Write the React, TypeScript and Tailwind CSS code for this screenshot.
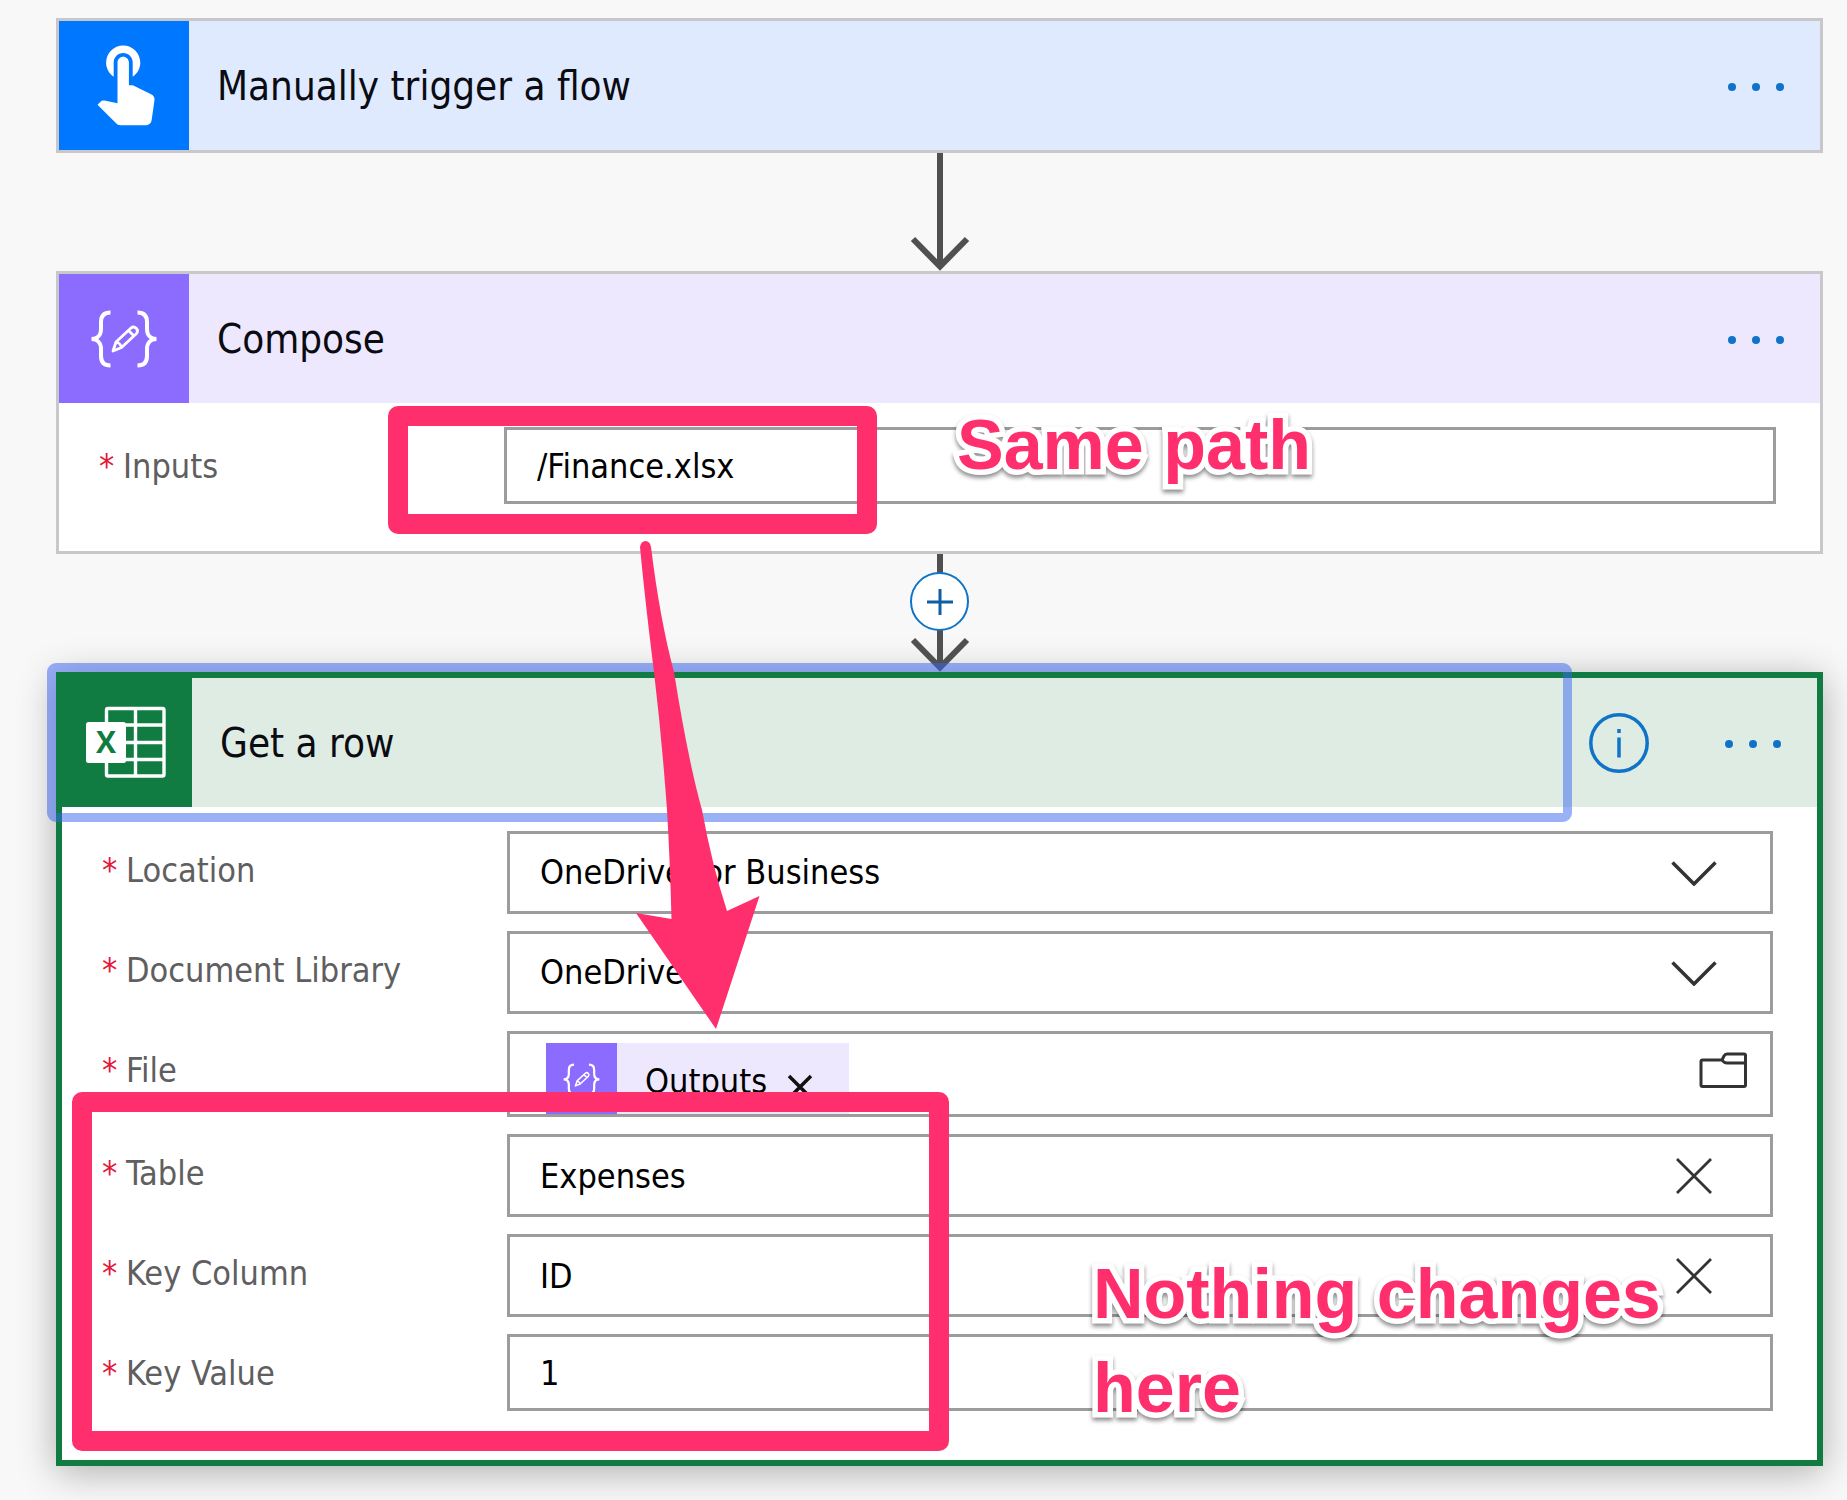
import { useState } from 'react';
import type { ReactNode } from 'react';
import clsx from 'clsx';

function TouchIcon() {
  return (
    <svg viewBox="0 0 129 129" className="w-full h-full" aria-hidden="true">
      <path
        fill="#fff"
        transform="translate(20 13) scale(3.8)"
        d="M9 11.24V7.5C9 6.12 10.12 5 11.5 5S14 6.12 14 7.5v3.74c1.21-.81 2-2.18 2-3.74C16 5.01 13.99 3 11.5 3S7 5.01 7 7.5c0 1.56.79 2.93 2 3.74zm9.84 4.63l-4.54-2.26c-.17-.07-.35-.11-.54-.11H13v-6c0-.83-.67-1.5-1.5-1.5S10 6.67 10 7.5v10.74l-3.43-.72c-.08-.01-.15-.03-.24-.03-.31 0-.59.13-.79.33l-.79.8 4.94 4.94c.27.27.65.44 1.06.44h6.79c.75 0 1.33-.55 1.44-1.28l.75-5.27c.01-.07.02-.14.02-.2 0-.62-.38-1.16-.91-1.38z"
      />
    </svg>
  );
}

function ComposeIcon() {
  return (
    <svg viewBox="0 0 129 129" className="w-full h-full" fill="none" stroke="#fff" strokeWidth="4" aria-hidden="true">
      <path d="M51 38.500C43.500 38.500 41.500 43 41.500 48V55C41.500 61 38 65 32 65C38 65 41.500 69 41.500 75V82C41.500 87 43.500 91.500 51 91.500" />
      <path d="M78 38.500C85.500 38.500 87.500 43 87.500 48V55C87.500 61 91 65 97 65C91 65 87.500 69 87.500 75V82C87.500 87 85.500 91.500 78 91.500" />
      <path
        strokeWidth="2.800"
        strokeLinejoin="round"
        d="M53.500 77L56.500 68L71.500 54C75 51 80 56 77 59.500L62 73.500ZM56.500 68C59 68.500 61.500 71 62 73.500M69 56.500L74.500 62"
      />
    </svg>
  );
}

function ExcelIcon() {
  return (
    <svg viewBox="0 0 129 129" className="w-full h-full" aria-hidden="true">
      <g fill="none" stroke="#fff" strokeWidth="3.400">
        <rect x="44" y="30.500" width="57.500" height="67.500" rx="1.500" />
        <path d="M73 30V98M44 47H102M44 64.500H102M44 81.500H102" />
      </g>
      <rect x="23.500" y="44" width="40" height="41" rx="2.500" fill="#fff" />
      <text x="43.500" y="75" textAnchor="middle" fontSize="30" fontWeight="700" fill="#107c41" fontFamily="'Open Sans', sans-serif">
        X
      </text>
    </svg>
  );
}

function MoreButton() {
  return (
    <button type="button" aria-label="More commands" className="flex items-center gap-4 pt-[2px] pl-6 pr-9 h-full">
      <span className="w-2 h-2 rounded-full bg-[#0f74c8]" />
      <span className="w-2 h-2 rounded-full bg-[#0f74c8]" />
      <span className="w-2 h-2 rounded-full bg-[#0f74c8]" />
    </button>
  );
}

interface StepCardProps {
  title: string;
  icon: ReactNode;
  iconClass: string;
  headerClass: string;
  selected?: boolean;
  children?: ReactNode;
}

function StepCard({ title, icon, iconClass, headerClass, selected, children }: StepCardProps) {
  return (
    <section
      className={clsx(
        'bg-white',
        selected ? 'border-6 border-[#107c41] shadow-[0_6px_36px_rgba(0,0,0,0.3)]' : 'border-3 border-[#c8c7ca]'
      )}
    >
      <header className={clsx('flex h-[129px]', headerClass)}>
        <button type="button" className="relative flex flex-1 items-center text-left">
          <span className={clsx('w-[130px] h-[129px] shrink-0', iconClass)}>{icon}</span>
          <span className="pl-7 text-[40px] leading-[52px] text-[#0b0b12]">{title}</span>
          {selected && (
            <span className="absolute -inset-[15px] border-9 rounded-[9px] border-[rgba(53,99,239,0.5)]" />
          )}
        </button>
        {selected && (
          <button type="button" aria-label="Step details" className="mx-8 shrink-0">
            <svg viewBox="0 0 60 60" className="w-[60px] h-[60px]" fill="none" stroke="#0f74c8">
              <circle cx="30" cy="30" r="28.200" strokeWidth="3.500" />
              <path d="M30 24.500V44.500M30 16V20" strokeWidth="3.500" />
            </svg>
          </button>
        )}
        <div className={clsx('shrink-0', selected && 'pl-5')}>
          <MoreButton />
        </div>
      </header>
      {children && (
        <div className={clsx('flex flex-col gap-[17px] pt-6 pr-11', selected ? 'pb-12' : 'pb-[46px]')}>{children}</div>
      )}
    </section>
  );
}

function Field({ id, label, children }: { id: string; label: string; children: ReactNode }) {
  return (
    <div className="flex items-start">
      <label htmlFor={id} className="w-[445px] shrink-0 pl-10 text-[34px] leading-[78px] text-[#5f5e60]">
        <span className="inline-block w-6 text-[#e3193a]">*</span>
        {label}
      </label>
      <div className="relative flex-1">{children}</div>
    </div>
  );
}

const boxClass = 'block w-full border-3 border-[#9c9c9c] bg-white pl-[30px] text-[34px] text-black outline-none';

function TextField({ id, label, initial }: { id: string; label: string; initial: string }) {
  const [value, setValue] = useState(initial);
  return (
    <Field id={id} label={label}>
      <input id={id} value={value} onChange={(e) => setValue(e.target.value)} className={clsx(boxClass, 'h-[77px]')} />
    </Field>
  );
}

function ClearableField({ id, label, initial }: { id: string; label: string; initial: string }) {
  const [value, setValue] = useState(initial);
  return (
    <Field id={id} label={label}>
      <input id={id} value={value} onChange={(e) => setValue(e.target.value)} className={clsx(boxClass, 'h-[83px]')} />
      <button
        type="button"
        aria-label={`Clear ${label}`}
        onClick={() => setValue('')}
        className="absolute inset-y-0 right-[61px] flex items-center"
      >
        <svg viewBox="0 0 36 36" className="w-9 h-9" stroke="#333" strokeWidth="2.800">
          <path d="M1 1L35 35M35 1L1 35" />
        </svg>
      </button>
    </Field>
  );
}

function SelectField({ id, label, options }: { id: string; label: string; options: string[] }) {
  return (
    <Field id={id} label={label}>
      <select id={id} className={clsx(boxClass, 'h-[83px] appearance-none')}>
        {options.map((option) => (
          <option key={option}>{option}</option>
        ))}
      </select>
      <span className="pointer-events-none absolute inset-y-0 right-[56px] flex items-center">
        <svg viewBox="0 0 46 26" className="w-[46px] h-[26px]" fill="none" stroke="#333" strokeWidth="3.500">
          <path d="M1.500 2.500L23 24L44.500 2.500" />
        </svg>
      </span>
    </Field>
  );
}

function FileField() {
  return (
    <Field id="file" label="File">
      <div id="file" className={clsx(boxClass, 'h-[86px] overflow-hidden pt-[9px]')}>
        <div className="ml-[6px] inline-flex h-[72px] bg-[#eee8ff]">
          <span className="w-[71px] h-[72px] bg-[#8c6cff]">
            <ComposeIcon />
          </span>
          <span className="pl-7 leading-[76px]">Outputs</span>
          <button type="button" aria-label="Remove Outputs" className="pl-5 pr-9 pt-4">
            <svg viewBox="0 0 26 26" className="w-[26px] h-[26px]" stroke="#111" strokeWidth="3.500">
              <path d="M2 2L24 24M24 2L2 24" />
            </svg>
          </button>
        </div>
      </div>
      <button type="button" aria-label="Browse files" className="absolute top-[21px] right-[26px]">
        <svg viewBox="0 0 48 37" className="w-12 h-[37px]" fill="none" stroke="#333" strokeWidth="3" strokeLinejoin="round">
          <path d="M23 8H3.500Q2 8 2 9.500V33Q2 34.500 3.500 34.500H45Q46.500 34.500 46.500 33V3.500Q46.500 2 45 2H28Q26 2 25 4L23 8Q25 11 28 11H46" />
        </svg>
      </button>
    </Field>
  );
}

function Connector({ withAdd }: { withAdd?: boolean }) {
  return (
    <div className="relative flex h-[118px] justify-center">
      <svg viewBox="0 0 60 118" className="w-[60px] h-[118px]" fill="none" stroke="#505050" strokeWidth="6">
        <path d="M30 0V114M3 86L30 113.500L57 86" />
      </svg>
      {withAdd && (
        <button
          type="button"
          aria-label="Insert a new step"
          className="absolute top-[18px] w-[59px] h-[59px] rounded-full border-2 border-[#0f74c8] bg-white flex items-center justify-center"
        >
          <svg viewBox="0 0 28 28" className="w-7 h-7" stroke="#0f5fa8" strokeWidth="3">
            <path d="M14 1V27M1 14H27" />
          </svg>
        </button>
      )}
    </div>
  );
}

const calloutClass =
  "absolute font-['Liberation_Sans',sans-serif] font-bold text-[70px] leading-[94px] text-[#ff2e6d] [-webkit-text-stroke:11px_white] [paint-order:stroke_fill] drop-shadow-[0_3px_2px_rgba(0,0,0,0.45)]";

// Markup drawn on top of the flow
function Annotations() {
  return (
    <div className="pointer-events-none absolute inset-0">
      <div className="absolute left-[388px] top-[406px] w-[489px] h-[128px] border-20 border-[#ff2e6d] rounded-[10px]" />
      <div className="absolute left-[72px] top-[1092px] w-[877px] h-[359px] border-20 border-[#ff2e6d] rounded-[10px]" />
      <svg viewBox="0 0 124 490" className="absolute left-[636px] top-[540px] w-[124px] h-[490px]" fill="#ff2e6d">
        <path d="M4 7Q5 1 9.500 1Q14 1 15 7Q24 80 38 132Q52 220 66 270Q76 325 91 371L123.500 356L80 489L0 373L35.500 379Q34 320 31 270Q26 200 18 132Q9 60 4 7Z" />
      </svg>
      <p className={clsx(calloutClass, 'left-[957px] top-[398px]')}>Same path</p>
      <p className={clsx(calloutClass, 'left-[1093px] top-[1247px]')}>
        Nothing changes
        <br />
        here
      </p>
    </div>
  );
}

export default function App() {
  return (
    <main className="relative min-h-screen overflow-hidden bg-[#f8f8f8] pl-14 pr-6 pt-[18px] pb-8 font-['DejaVu_Sans_Condensed','DejaVu_Sans',sans-serif]">
      <StepCard
        title="Manually trigger a flow"
        icon={<TouchIcon />}
        iconClass="bg-[#0077ff]"
        headerClass="bg-[#dfeaff]"
      />
      <Connector />
      <StepCard title="Compose" icon={<ComposeIcon />} iconClass="bg-[#8c6cff]" headerClass="bg-[#eee8ff]">
        <TextField id="inputs" label="Inputs" initial="/Finance.xlsx" />
      </StepCard>
      <Connector withAdd />
      <StepCard title="Get a row" icon={<ExcelIcon />} iconClass="bg-[#107c41]" headerClass="bg-[#dfece4]" selected>
        <SelectField id="location" label="Location" options={['OneDrive for Business']} />
        <SelectField id="library" label="Document Library" options={['OneDrive']} />
        <FileField />
        <ClearableField id="table" label="Table" initial="Expenses" />
        <ClearableField id="key-column" label="Key Column" initial="ID" />
        <TextField id="key-value" label="Key Value" initial="1" />
      </StepCard>
      <Annotations />
    </main>
  );
}
